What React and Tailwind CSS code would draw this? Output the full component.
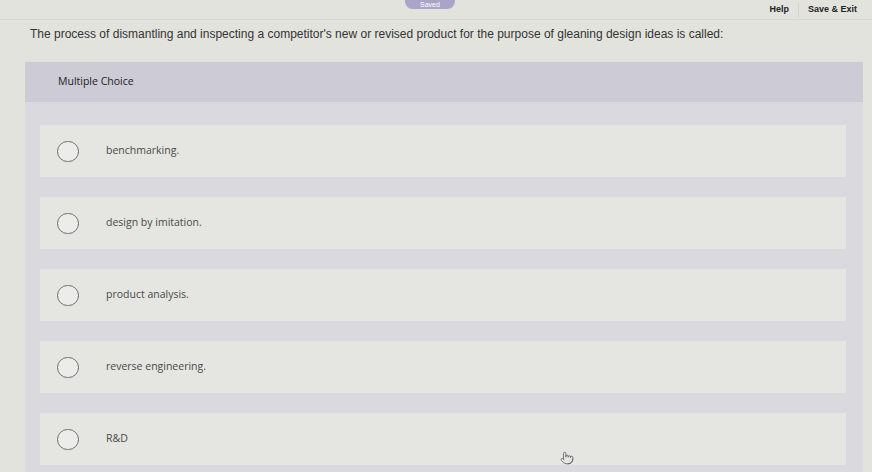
import React from "react";
import { Pointer } from "lucide-react";

const options = [
  "benchmarking.",
  "design by imitation.",
  "product analysis.",
  "reverse engineering.",
  "R&D",
];

export default function App() {
  return (
    <div
      className="relative w-[872px] h-[472px] overflow-hidden bg-[#e3e3de] text-[#2a2a2a]"
      style={{ fontFamily: '"Liberation Sans", Arial, sans-serif' }}
    >
      <header className="relative h-[20px] border-b border-[#d6d6d2] flex items-center justify-end pr-[15px]">
        <div className="absolute left-[405px] top-[-6px] w-[50px] h-[15px] rounded-full bg-[#aaa4c8] flex items-end justify-center pb-[1px]">
          <span className="text-[7px] leading-none text-white">Saved</span>
        </div>
        <span className="text-[9px] font-bold text-[#222] mr-[9px]">Help</span>
        <span className="w-px h-[14px] bg-[#d2d2ce] mr-[9px]" />
        <span className="text-[9px] font-bold text-[#222]">Save &amp; Exit</span>
      </header>

      <p className="mt-[7px] ml-[30px] text-[12px] leading-[15px] text-[#333]">
        The process of dismantling and inspecting a competitor's new or revised product for the purpose of gleaning design ideas is called:
      </p>

      <section className="mt-[20px] ml-[25px] w-[838px] bg-[#d9d9de]">
        <div className="h-[40px] bg-[#cccbd6] flex items-center pl-[33px]">
          <span className="text-[10.5px] text-[#222]" style={{ fontFamily: '"Open Sans", sans-serif' }}>
            Multiple Choice
          </span>
        </div>
        <div className="pt-[23px] pb-[20px] pl-[15px] pr-[17px] flex flex-col gap-[20px]">
          {options.map((o) => (
            <div key={o} className="h-[52px] bg-[#e5e5e1] flex items-center pl-[17px]">
              <span className="w-[22px] h-[21px] rounded-full border border-[#6f6f6f] bg-[#ececea] shrink-0" />
              <span
                className="ml-[27px] text-[10.5px] text-[#4a4a4a]"
                style={{ fontFamily: '"Open Sans", sans-serif' }}
              >
                {o}
              </span>
            </div>
          ))}
        </div>
      </section>

      <Pointer className="absolute left-[560px] top-[450px] w-[14px] h-[16px] text-[#555]" strokeWidth={1.3} />
    </div>
  );
}
